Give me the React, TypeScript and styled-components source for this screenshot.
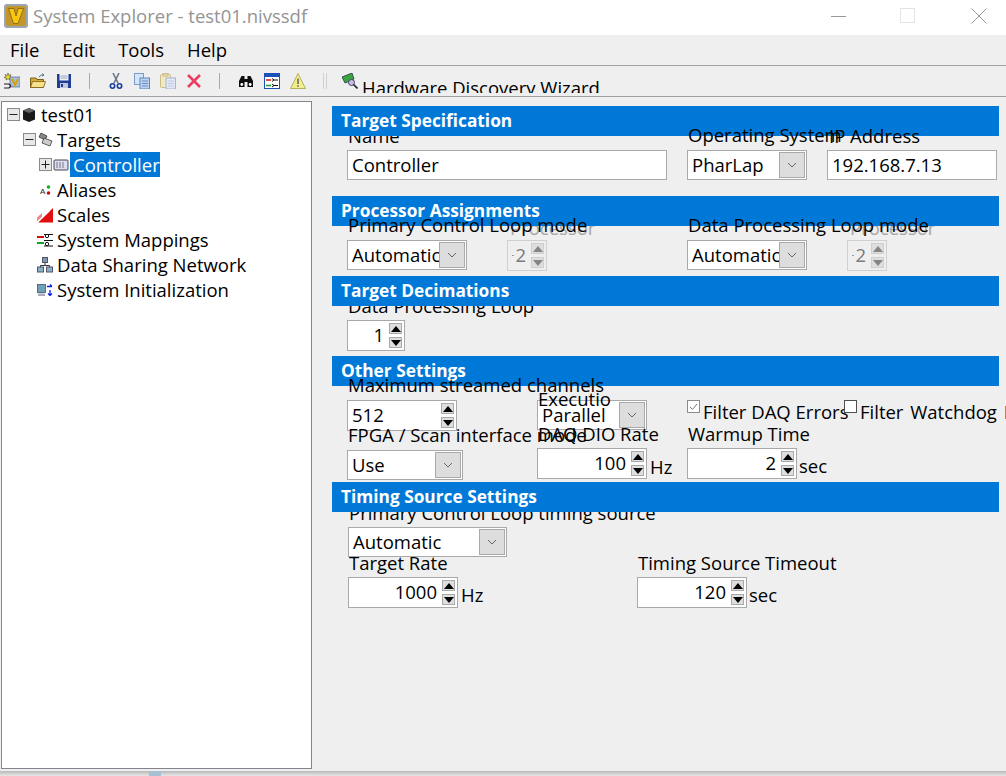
import React from "react";
import styled, { createGlobalStyle } from "styled-components";

const Global = createGlobalStyle`
  html, body { margin: 0; padding: 0; background: #efefef; overflow: hidden; }
  #root { width: 1006px; height: 776px; }
  * { box-sizing: border-box; }
`;
const FONT = `"Open Sans", "Noto Sans", "Liberation Sans", sans-serif`;

const Win = styled.div`
  width: 1006px; height: 776px; display: flex; flex-direction: column; overflow: hidden;
  font-family: ${FONT}; font-size: 18.5px; color: #000; background: #efefef;
`;
const TitleBar = styled.div`
  height: 35px; flex: none; background: #fff; display: flex; align-items: center; padding: 0 19px 4px 4px;
`;
const AppLogo = styled.svg`width: 24px; height: 24px; flex: none;`;
const TitleText = styled.span`
  margin-left: 5px; color: #949494; flex: 1; white-space: nowrap;
`;
const WinButtons = styled.div`display: flex; align-items: center;`;
const WinBtn = styled.svg<{ $ml: number }>`width: 16px; height: 16px; margin-left: ${p => p.$ml}px; display: block;`;

const MenuBar = styled.div`
  height: 31px; flex: none; display: flex; align-items: center; gap: 23px; padding: 0 0 2px 10px;
  border-bottom: 1px solid #a0a0a0;
`;
const Toolbar = styled.div`
  height: 31px; flex: none; display: flex; align-items: flex-start; padding: 7px 0 0 4px; overflow: hidden;
  border-bottom: 1px solid #a0a0a0;
`;
const ToolIcon = styled.svg<{ $ml?: number }>`width: 16px; height: 16px; flex: none; margin-left: ${p => p.$ml ?? 0}px;`;
const Sep = styled.div<{ $ml: number; $double?: boolean }>`
  flex: none; width: 1px; height: 16px; margin-left: ${p => p.$ml}px; background: #a8a8a8;
  ${p => p.$double && `background: #d0d0d0; box-shadow: 3px 0 0 #d0d0d0;`}
`;
const WizardClip = styled.div`margin-left: 4px; height: 20px; overflow: hidden; flex: none;`;
const WizardLabel = styled.div`padding-top: 3px; line-height: 24px; white-space: nowrap;`;

const Main = styled.div`flex: 1; display: flex; min-height: 0; align-items: flex-start;`;
const Tree = styled.div`
  width: 311px; height: 668px; flex: none; margin: 4px 0 0 1px; background: #fff;
  border: 1px solid #85858f;
`;
const TreeRow = styled.div<{ $indent: number }>`
  height: 25px; display: flex; align-items: center; padding-left: ${p => p.$indent}px; white-space: nowrap;
`;
const Expander = styled.svg`width: 13px; height: 13px; flex: none; margin-right: 1px;`;
const TreeIcon = styled.svg`width: 16px; height: 16px; flex: none;`;
const TreeLabel = styled.span<{ $sel?: boolean }>`
  margin-left: ${p => p.$sel ? 1 : 4}px; padding: 0 ${p => p.$sel ? 3 : 0}px;
  ${p => p.$sel && `background: #0078d7; color: #fff; height: 25px; line-height: 25px; width: 90px;`}
`;

const Panel = styled.div`
  flex: 1; position: relative; height: 100%;
`;
const Header = styled.div<{ $y: number }>`
  position: absolute; left: 20px; top: ${p => p.$y}px; width: 667px; height: 30px; z-index: 2;
  background: #0078d7; color: #fff; font-weight: 700; font-size: 17.3px; line-height: 29px; padding-left: 9px;
`;
const Label = styled.span<{ $x: number; $y: number; $under?: boolean; $off?: boolean; $spaced?: boolean }>`
  position: absolute; left: ${p => p.$x - 312}px; top: ${p => p.$y - 97}px; line-height: 24px; white-space: nowrap;
  z-index: ${p => p.$under ? 1 : 3};
  color: ${p => p.$off ? "#a6a6a6" : "#000"};
  ${p => p.$spaced && `word-spacing: 2px;`}
`;
const Box = styled.div<{ $x: number; $y: number; $w: number; $h?: number; $off?: boolean }>`
  position: absolute; left: ${p => p.$x - 312}px; top: ${p => p.$y - 97}px; width: ${p => p.$w}px; height: ${p => p.$h ?? 30}px;
  background: ${p => p.$off ? "#efefef" : "#fff"}; border: 1px solid ${p => p.$off ? "#d0d0d0" : "#a9a9a9"};
  display: flex; align-items: center; overflow: hidden;
`;
const BoxText = styled.span`padding-left: 4px; white-space: nowrap; margin-top: -2px;`;
const SpinValue = styled.span<{ $off?: boolean }>`
  flex: 1; text-align: right; padding-right: 5px; margin-top: -2px; position: relative;
  color: ${p => p.$off ? "#7a7a7a" : "#000"};
`;
const DisabledTick = styled.i`
  position: absolute; left: 4px; top: 13px; width: 2px; height: 1px; background: #9a9a9a;
`;
const SpinLeft = styled.span`flex: 1; padding-left: 4px; margin-top: -2px;`;
const DropBtn = styled.div`
  position: absolute; right: 1px; top: 1px; bottom: 1px; width: 26px;
  background: #ddd; border: 1px solid #a9a9a9; display: flex; align-items: center; justify-content: center;
`;
const Chevron = styled.svg`width: 10px; height: 6px;`;
const SpinCol = styled.div`
  width: 13px; flex: none; margin-right: 2px; align-self: stretch; display: flex; flex-direction: column; gap: 3px; padding: 2px 0;
`;
const SpinBtn = styled.div<{ $off?: boolean }>`
  flex: 1; background: #dedede; display: flex; align-items: center; justify-content: center;
  border: 1px solid ${p => p.$off ? "#cfcfcf" : "#a9a9a9"};
`;
const Arrow = styled.div<{ $down?: boolean; $off?: boolean }>`
  width: 0; height: 0; border-left: 5px solid transparent; border-right: 5px solid transparent;
  ${p => `border-${p.$down ? "top" : "bottom"}: 6px solid ${p.$off ? "#858585" : "#000"};`}
`;
const Check = styled.div<{ $x: number; $y: number; $on?: boolean }>`
  position: absolute; left: ${p => p.$x - 312}px; top: ${p => p.$y - 97}px; width: 13px; height: 13px;
  background: #fff; border: 1px solid ${p => p.$on ? "#8c8c8c" : "#505050"}; z-index: 3; display: flex; align-items: center; justify-content: center;
`;
const BottomStrip = styled.div`
  height: 5px; flex: none; background: linear-gradient(#b8b8b8, #e8e8e8); padding-left: 149px;
`;
const BottomTab = styled.div`width: 12px; height: 5px; background: #a9c0d4;`;

const Select: React.FC<{ x: number; y: number; w: number; text: string }> = ({ x, y, w, text }) => (
  <Box $x={x} $y={y} $w={w}>
    <BoxText>{text}</BoxText>
    <DropBtn>
      <Chevron viewBox="0 0 10 6"><path d="M1 1l4 4 4-4" fill="none" stroke="#666" strokeWidth="1" /></Chevron>
    </DropBtn>
  </Box>
);
const Spin: React.FC<{ x: number; y: number; w: number; v: string; off?: boolean; left?: boolean }> = ({ x, y, w, v, off, left }) => (
  <Box $x={x} $y={y} $w={w} $h={31} $off={off}>
    {left ? <SpinLeft>{v}</SpinLeft> : <SpinValue $off={off}>{off && <DisabledTick />}{v}</SpinValue>}
    <SpinCol>
      <SpinBtn $off={off}><Arrow $off={off} /></SpinBtn>
      <SpinBtn $off={off}><Arrow $down $off={off} /></SpinBtn>
    </SpinCol>
  </Box>
);

const Plus: React.FC<{ open?: boolean }> = ({ open }) => (
  <Expander viewBox="0 0 13 13">
    <rect x=".5" y=".5" width="12" height="12" fill="#e8e8e8" stroke="#8a8a8a" />
    <path d="M2.5 6.5h8" stroke="#223" />
    {!open && <path d="M6.5 2.5v8" stroke="#223" />}
  </Expander>
);

export default function App() {
  return (
    <Win>
      <Global />
      <TitleBar>
        <AppLogo viewBox="0 0 24 24">
          <rect width="24" height="24" rx="3" fill="#9aa6b0" />
          <rect x="2" y="2" width="20" height="20" rx="2" fill="#c4952a" />
          <path d="M4.500 4.500h5.500l2 7.500 2.300-7.500h5.200L14 19.500h-4.500z" fill="#f8c70e" stroke="#7d5f14" strokeWidth=".8" />
        </AppLogo>
        <TitleText>System Explorer - test01.nivssdf</TitleText>
        <WinButtons>
          <WinBtn $ml={0} viewBox="0 0 16 16"><path d="M0 8.500h15" stroke="#999" /></WinBtn>
          <WinBtn $ml={53} viewBox="0 0 16 16"><rect x=".5" y=".5" width="14" height="14" fill="none" stroke="#e3e3e3" /></WinBtn>
          <WinBtn $ml={55} viewBox="0 0 16 16"><path d="M.5.5l15 15M15.500.5l-15 15" stroke="#999" /></WinBtn>
        </WinButtons>
      </TitleBar>
      <MenuBar><span>File</span><span>Edit</span><span>Tools</span><span>Help</span></MenuBar>
      <Toolbar>
        <ToolIcon viewBox="0 0 16 16"><path d="M4 0l.8 2.500L7 1.500 5.800 3.500 8 4.500l-2.400.5L6 7 4 5.800 2 7l.4-2L0 4.500l2.200-1L1 1.500l2.200 1z" fill="#f0e020" stroke="#333" strokeWidth=".5" /><rect x="6" y="4" width="10" height="10" fill="#a7bcdc" stroke="#5b6a88" strokeWidth=".7" /><path d="M8 6l3 6 3-6" fill="none" stroke="#d9a400" strokeWidth="2" /><path d="M0 11h5l2 2M0 15h5l2-2" fill="none" stroke="#222" strokeWidth="1.200" /></ToolIcon>
        <ToolIcon $ml={10} viewBox="0 0 16 16"><path d="M.5 5V14.500h13V6.500H7L6 5z" fill="#d9a93a" stroke="#7a6018" /><path d="M.5 14.500l2-6h13l-2 6z" fill="#f6e08a" stroke="#7a6018" strokeWidth=".8" /><path d="M9 4q2-3 5-2M12.500 .5l1.500 1.500-2 1" fill="none" stroke="#3a7a80" /></ToolIcon>
        <ToolIcon $ml={10} viewBox="0 0 16 16"><rect x="1" y="1" width="14" height="14" fill="#1f3c96" /><rect x="3.500" y="1" width="9" height="6.500" fill="#eef0f6" /><path d="M4.500 3h7M4.500 5h7" stroke="#a0a8c0" /><rect x="4" y="10" width="8" height="5" fill="#c0c8e0" /><rect x="5" y="11" width="2" height="3" fill="#1f3c96" /></ToolIcon>
        <Sep $ml={17} />
        <ToolIcon $ml={18} viewBox="0 0 16 16"><path d="M5 0l5 10M11 0L6 10" stroke="#6a7688" strokeWidth="1.600" /><circle cx="4.500" cy="13" r="2.200" fill="none" stroke="#17409a" strokeWidth="1.600" /><circle cx="11.500" cy="13" r="2.200" fill="none" stroke="#17409a" strokeWidth="1.600" /></ToolIcon>
        <ToolIcon $ml={10} viewBox="0 0 16 16"><rect x=".5" y=".5" width="9" height="11" fill="#d6e5f8" stroke="#7a9cc8" /><rect x="6" y="5" width="9.500" height="11" fill="#bcd4f2" stroke="#5f84bc" /><path d="M8 8h6M8 10.500h6M8 13h6" stroke="#6a8cc0" /></ToolIcon>
        <ToolIcon $ml={10} viewBox="0 0 16 16"><rect x=".5" y="1.500" width="10" height="13" rx="1" fill="#f1e8c4" stroke="#c8bc88" /><rect x="3" y=".5" width="5" height="2.500" fill="#e6dcae" stroke="#c8bc88" /><rect x="6" y="5" width="9.500" height="11" fill="#e2e8f6" stroke="#a8b4cc" /><path d="M8 8h6M8 10.500h6M8 13h6" stroke="#c0cae0" /></ToolIcon>
        <ToolIcon $ml={10} viewBox="0 0 16 16"><path d="M2 2l12 12M14 2L2 14" stroke="#ea3f5e" strokeWidth="2.600" /></ToolIcon>
        <Sep $ml={17} />
        <ToolIcon $ml={18} viewBox="0 0 16 16"><path d="M1 14V8l2.500-5h3v3h3V3h3L15 8v6h-5.500V9h-3v5z" fill="#0d0d0d" /><circle cx="3.800" cy="11.500" r="1.400" fill="#fff" /><circle cx="12.200" cy="11.500" r="1.400" fill="#fff" /></ToolIcon>
        <ToolIcon $ml={10} viewBox="0 0 16 16"><rect x=".5" y=".5" width="15" height="15" fill="#fff" stroke="#1a50b8" /><rect x="1" y="1" width="14" height="3" fill="#1a50b8" /><path d="M2 7h5" stroke="#d82020" strokeWidth="1.600" /><path d="M2 12.500h5" stroke="#20a030" strokeWidth="1.600" /><path d="M8 5.500l2 1.500h4M8 8.500l2-1.500M8 11l2 1.500h4M8 14l2-1.500" stroke="#111" fill="none" /></ToolIcon>
        <ToolIcon $ml={10} viewBox="0 0 16 16"><path d="M8 .5l7.500 15H.5z" fill="#f2ee90" stroke="#b4b060" /><path d="M8 5.500v5.500M8 12.200v1.600" stroke="#666" strokeWidth="1.600" /></ToolIcon>
        <Sep $ml={17} $double />
        <ToolIcon $ml={18} viewBox="0 0 16 16"><path d="M0 4l5-2 5-2 2 6-4 2-5 2z" fill="#3aa63f" stroke="#123" strokeWidth=".7" /><circle cx="9.500" cy="9.500" r="3" fill="#c4bfe0" stroke="#4a3a6a" /><path d="M11.500 11.500l4 4" stroke="#222" strokeWidth="1.600" /></ToolIcon>
        <WizardClip><WizardLabel>Hardware Discovery Wizard</WizardLabel></WizardClip>
      </Toolbar>
      <Main>
        <Tree>
          <TreeRow $indent={5}><Plus open /><TreeIcon viewBox="0 0 16 16"><path d="M8 1l6 2.500v9L8 15l-6-2.500v-9z" fill="#1a1a1a" /><path d="M8 1l6 2.500L8 6 2 3.500z" fill="#666" /></TreeIcon><TreeLabel>test01</TreeLabel></TreeRow>
          <TreeRow $indent={21}><Plus open /><TreeIcon viewBox="0 0 16 16"><path d="M4 1l6 3-2 4-6-3z" fill="#888" stroke="#222" strokeWidth=".7" /><path d="M7 6l8 3-2 5-8-3z" fill="#ccc" stroke="#222" strokeWidth=".7" /></TreeIcon><TreeLabel>Targets</TreeLabel></TreeRow>
          <TreeRow $indent={37}><Plus /><TreeIcon viewBox="0 0 16 16"><rect x="1" y="3" width="14" height="10" rx="1" fill="#dde" stroke="#445" /><path d="M4 5v6M7 5v6M10 5v6" stroke="#778" /></TreeIcon><TreeLabel $sel>Controller</TreeLabel></TreeRow>
          <TreeRow $indent={35}><TreeIcon viewBox="0 0 16 16"><text x="3" y="12" fontSize="8" fill="#222" fontFamily="Liberation Sans">A</text><circle cx="11.500" cy="5" r="1.800" fill="#10b020" /><circle cx="11.500" cy="11" r="1.800" fill="#c01010" /></TreeIcon><TreeLabel>Aliases</TreeLabel></TreeRow>
          <TreeRow $indent={35}><TreeIcon viewBox="0 0 16 16"><path d="M0 15V10.500L5 6v5.500z" fill="#e88a8a" /><path d="M1 15.500L16 1v14.500z" fill="#e01010" /><path d="M0 15.500L12 4" stroke="#fff" strokeWidth="1.400" /></TreeIcon><TreeLabel>Scales</TreeLabel></TreeRow>
          <TreeRow $indent={35}><TreeIcon viewBox="0 0 16 16"><path d="M0 5h7" stroke="#d01010" strokeWidth="2" /><path d="M0 11h7" stroke="#10a030" strokeWidth="2" /><path d="M7 2.500h9M7 8.500h9M7 14h9" stroke="#111" /><circle cx="10" cy="4" r="1.700" fill="#fff" stroke="#111" /><circle cx="10" cy="12" r="1.700" fill="#fff" stroke="#111" /></TreeIcon><TreeLabel>System Mappings</TreeLabel></TreeRow>
          <TreeRow $indent={35}><TreeIcon viewBox="0 0 16 16"><rect x="5.500" y=".5" width="5" height="5" fill="#7a98b4" stroke="#556" /><rect x=".5" y="10" width="6" height="5" fill="#8ab0cc" stroke="#556" /><rect x="9.500" y="10" width="6" height="5" fill="#8ab0cc" stroke="#556" /><path d="M8 5.500v3M3.500 10V8.500h9V10" stroke="#334" fill="none" /></TreeIcon><TreeLabel>Data Sharing Network</TreeLabel></TreeRow>
          <TreeRow $indent={35}><TreeIcon viewBox="0 0 16 16"><rect x=".5" y="2.500" width="8" height="8" fill="#6fa0b8" stroke="#456" strokeWidth=".8" /><rect x="1" y="11.500" width="7" height="2.500" fill="#aab" /><path d="M10 4.500h5M15 4.500l-2-2M13 8v5M13 13.500l-2-2M13 13.500l2-2" stroke="#1020e0" strokeWidth="1.300" fill="none" /></TreeIcon><TreeLabel>System Initialization</TreeLabel></TreeRow>
        </Tree>
        <Panel>
          <Header $y={9}>Target Specification</Header>
          <Header $y={99}>Processor Assignments</Header>
          <Header $y={179}>Target Decimations</Header>
          <Header $y={259}>Other Settings</Header>
          <Header $y={385}>Timing Source Settings</Header>

          <Label $x={348} $y={124} $under>Name</Label>
          <Box $x={347} $y={150} $w={320}><BoxText>Controller</BoxText></Box>
          <Label $x={688} $y={123}>Operating System</Label>
          <Label $x={829} $y={124}>IP Address</Label>
          <Select x={687} y={150} w={120} text="PharLap" />
          <Box $x={827} $y={150} $w={170}><BoxText>192.168.7.13</BoxText></Box>

          <Label $x={510} $y={216} $under $off>Processor</Label>
          <Label $x={850} $y={216} $under $off>Processor</Label>
          <Label $x={348} $y={213}>Primary Control Loop mode</Label>
          <Label $x={688} $y={213}>Data Processing Loop mode</Label>
          <Select x={347} y={240} w={120} text="Automatic" />
          <Spin x={507} y={240} w={40} v="2" off />
          <Select x={687} y={240} w={120} text="Automatic" />
          <Spin x={847} y={240} w={40} v="2" off />

          <Label $x={348} $y={294} $under>Data Processing Loop</Label>
          <Spin x={347} y={320} w={58} v="1" />

          <Label $x={348} $y={373}>Maximum streamed channels</Label>
          <Spin x={347} y={400} w={110} v="512" left />
          <Select x={537} y={400} w={110} text="Parallel" />
          <Label $x={538} $y={387}>Executio</Label>
          <Check $x={687} $y={400} $on><svg width="11" height="11" viewBox="0 0 11 11"><path d="M2 6l2.500 2.500L9 3" fill="none" stroke="#777" /></svg></Check>
          <Label $x={703} $y={400}>Filter DAQ Errors</Label>
          <Check $x={844} $y={400} />
          <Label $x={860} $y={400} $spaced>Filter Watchdog Errors</Label>

          <Label $x={348} $y={423}>FPGA / Scan interface mode</Label>
          <Label $x={538} $y={422}>DAQ DIO Rate</Label>
          <Label $x={688} $y={422}>Warmup Time</Label>
          <Select x={347} y={450} w={116} text="Use" />
          <Spin x={537} y={448} w={110} v="100" />
          <Label $x={650} $y={455}>Hz</Label>
          <Spin x={687} y={448} w={110} v="2" />
          <Label $x={799} $y={454}>sec</Label>

          <Label $x={349} $y={501} $under>Primary Control Loop timing source</Label>
          <Select x={348} y={527} w={159} text="Automatic" />
          <Label $x={349} $y={551}>Target Rate</Label>
          <Label $x={638} $y={551}>Timing Source Timeout</Label>
          <Spin x={348} y={577} w={110} v="1000" />
          <Label $x={461} $y={583}>Hz</Label>
          <Spin x={637} y={577} w={110} v="120" />
          <Label $x={749} $y={583}>sec</Label>
        </Panel>
      </Main>
      <BottomStrip><BottomTab /></BottomStrip>
    </Win>
  );
}
